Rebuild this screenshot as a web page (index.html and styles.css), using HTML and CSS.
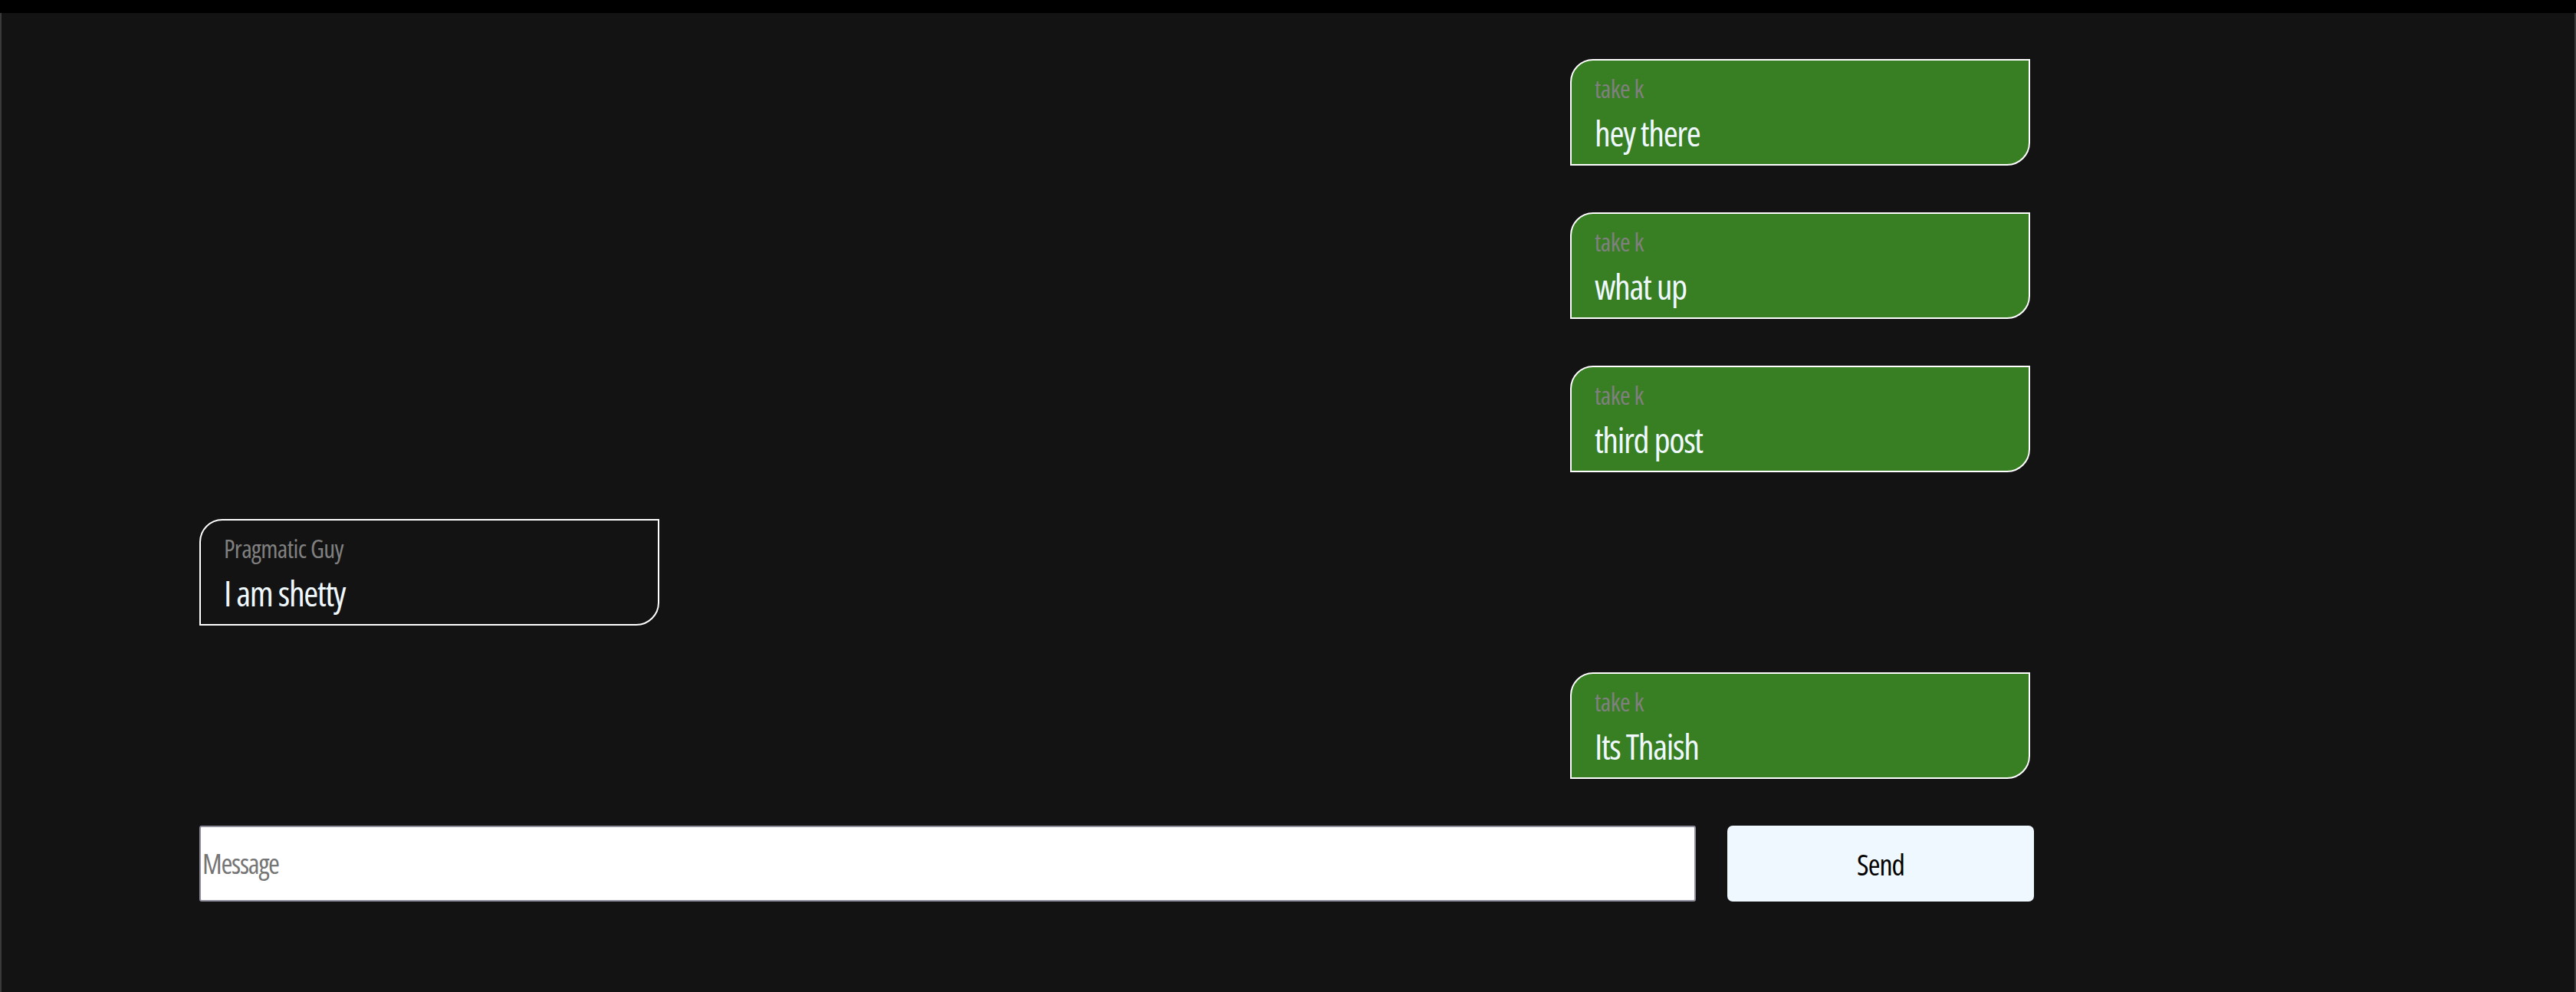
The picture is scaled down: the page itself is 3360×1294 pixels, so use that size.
FILE: index.html
```html
<!DOCTYPE html>
<html lang="en">
<head>
    <meta charset="UTF-8">
    <meta name="viewport" content="width=device-width, initial-scale=1.0">
    <title>Chat</title>
    <link rel="stylesheet" href="styles.css">
</head>
<body>
    <div class="chat">
        <div class="messages">
            <div class="bubble mine">
                <div class="name">take k</div>
                <div class="text">hey there</div>
            </div>
            <div class="bubble mine">
                <div class="name">take k</div>
                <div class="text">what up</div>
            </div>
            <div class="bubble mine">
                <div class="name">take k</div>
                <div class="text">third post</div>
            </div>
            <div class="bubble">
                <div class="name">Pragmatic Guy</div>
                <div class="text">I am shetty</div>
            </div>
            <div class="bubble mine">
                <div class="name">take k</div>
                <div class="text">Its Thaish</div>
            </div>
        </div>
        <form class="send-form" onsubmit="return false">
            <input type="text" class="msg-input" placeholder="Message">
            <button type="submit" class="send-btn">Send</button>
        </form>
    </div>
</body>
</html>
```

FILE: styles.css
```css
body {
    margin: 0;
    background: #000;
    font-family: "Open Sans", sans-serif;
    font-stretch: 75%;
    font-weight: 500;
}
.chat {
    margin-top: 17px;
    height: calc(100vh - 17px);
    box-sizing: border-box;
    background: #131313;
    border-left: 2px solid #3a3a3a;
    border-right: 2px solid #3a3a3a;
    padding: 60px 0 0 258px;
}
.messages {
    width: 2388px;
    display: flex;
    flex-direction: column;
    gap: 61px;
}
.bubble {
    width: 600px;
    height: 139px;
    box-sizing: border-box;
    border: 2px solid #fff;
    border-radius: 30px 0 30px 0;
    padding: 20px 30px 0;
    color: #f0f8ff;
}
.bubble.mine {
    align-self: flex-end;
    background: #387e22;
}
.name {
    font-size: 33px;
    line-height: 1;
    letter-spacing: -0.6px;
    color: #808080;
}
.text {
    margin-top: 18px;
    font-size: 46px;
    line-height: 1;
    letter-spacing: -1.3px;
}
.send-form {
    display: flex;
    gap: 41px;
    margin-top: 61px;
}
.msg-input {
    width: 1952px;
    height: 99px;
    box-sizing: border-box;
    margin: 0;
    padding: 0 2px;
    border: 2px solid #8f8f9d;
    border-radius: 3px;
    background: #fff;
    font-family: inherit;
    font-stretch: inherit;
    font-weight: inherit;
    font-size: 36px;
    letter-spacing: -1.2px;
}
.msg-input::placeholder {
    color: #757575;
}
.send-btn {
    width: 400px;
    height: 99px;
    border: none;
    border-radius: 7px;
    background: #f0f8ff;
    color: #000;
    font-family: inherit;
    font-stretch: inherit;
    font-weight: inherit;
    font-size: 38px;
    letter-spacing: -1px;
    cursor: pointer;
}
```
